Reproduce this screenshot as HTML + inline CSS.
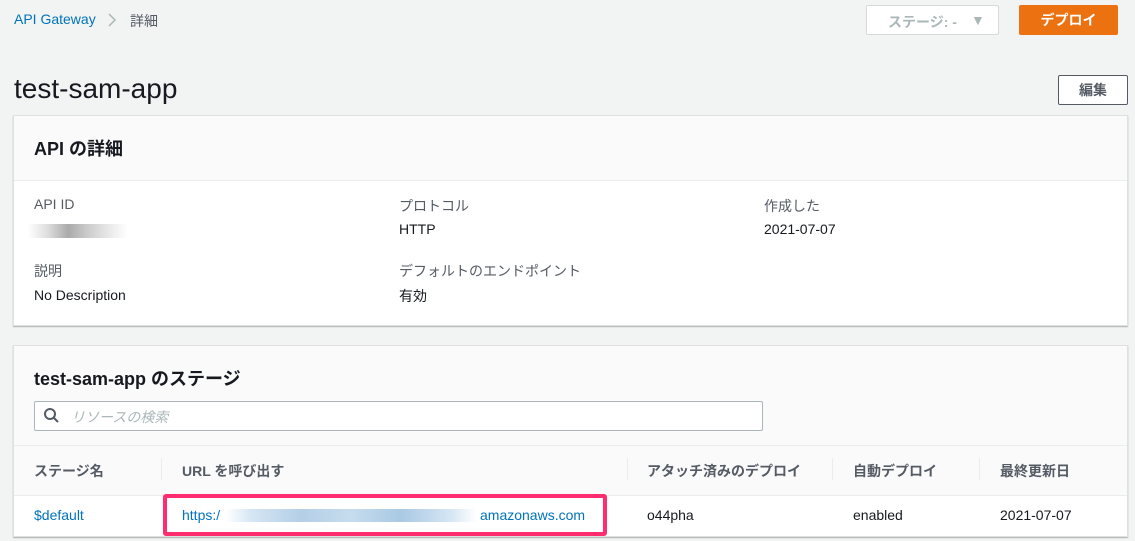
<!DOCTYPE html>
<html><head><meta charset="utf-8"><style>
*{box-sizing:border-box;margin:0;padding:0}
body{width:1135px;height:541px;overflow:hidden;background:#f2f3f3;font-family:"Liberation Sans","Noto Sans CJK JP",sans-serif;font-size:14px;color:#16191f;position:relative}
.a{position:absolute}
.link{color:#0073bb}
.panel{position:absolute;left:13px;width:1115px;background:#fff;border:1px solid #e0e0e0;box-shadow:0 1px 1px rgba(0,28,36,.3)}
.lbl{color:#545b64;font-size:14px}
.th{font-weight:bold;color:#545b64;font-size:14px}
</style></head><body>
<div class="a link" style="left:14px;top:11px;font-size:14px">API Gateway</div>
<svg class="a" style="left:107px;top:12px" width="10" height="16"><path d="M2 2l6 6-6 6" stroke="#aab7b8" stroke-width="1.5" fill="none"/></svg>
<div class="a" style="left:130px;top:11px;color:#545b64">詳細</div>
<div class="a" style="left:866px;top:5px;width:133px;height:30px;background:#fff;border:1px solid #d5dbdb;border-radius:2px;color:#aab7b8;font-weight:bold;font-size:14px;padding:6px 0 0 21px">ステージ: -<span style="position:absolute;left:104px;top:6px">▼</span></div>
<div class="a" style="left:1019px;top:5px;width:99px;height:30px;background:#ec7211;border-radius:2px;color:#fff;font-weight:bold;text-align:center;line-height:30px">デプロイ</div>
<div class="a" style="left:14px;top:73px;font-size:28px;color:#16191f">test-sam-app</div>
<div class="a" style="left:1058px;top:75px;width:70px;height:30px;background:#fff;border:1px solid #545b64;border-radius:2px;color:#545b64;font-weight:bold;text-align:center;line-height:28px">編集</div>

<div class="panel" style="top:115px;height:211px">
<div style="height:65px;background:#fafafa;border-bottom:1px solid #eaeded;padding:19px 0 0 20px;font-size:18px;font-weight:bold">API の詳細</div>
<div class="a lbl" style="left:20px;top:80px">API ID</div>
<div class="a" style="left:14px;top:108px;width:100px;height:14px;background:linear-gradient(90deg,#fff,#ddd 20%,#aaa 40%,#ccc 60%,#eee 85%,#fff)"></div>
<div class="a lbl" style="left:385px;top:80px">プロトコル</div>
<div class="a" style="left:385px;top:105px">HTTP</div>
<div class="a lbl" style="left:750px;top:80px">作成した</div>
<div class="a" style="left:750px;top:105px">2021-07-07</div>
<div class="a lbl" style="left:20px;top:145px">説明</div>
<div class="a" style="left:20px;top:171px">No Description</div>
<div class="a lbl" style="left:385px;top:145px">デフォルトのエンドポイント</div>
<div class="a" style="left:385px;top:170px">有効</div>
</div>

<div class="panel" style="top:345px;height:192px">
<div style="height:100px;background:#fafafa;border-bottom:1px solid #eaeded"></div>
<div class="a" style="left:20px;top:19px;font-size:18px;font-weight:bold">test-sam-app のステージ</div>
<div class="a" style="left:20px;top:55px;width:729px;height:30px;background:#fff;border:1px solid #aab7b8;border-radius:2px"></div>
<svg class="a" style="left:29px;top:61px" width="18" height="18"><circle cx="7" cy="7" r="5" stroke="#545b64" stroke-width="2" fill="none"/><path d="M11 11l4 4" stroke="#545b64" stroke-width="2"/></svg>
<div class="a" style="left:57px;top:61px;color:#aab7b8;font-style:italic">リソースの検索</div>
<div class="a" style="left:0;top:100px;width:1113px;height:50px;background:#fafafa;border-bottom:1px solid #eaeded"></div>
<div class="a th" style="left:20px;top:115px">ステージ名</div>
<div class="a" style="left:147px;top:112px;width:1px;height:22px;background:#eaeded"></div>
<div class="a th" style="left:168px;top:115px">URL を呼び出す</div>
<div class="a" style="left:613px;top:112px;width:1px;height:22px;background:#eaeded"></div>
<div class="a th" style="left:633px;top:115px">アタッチ済みのデプロイ</div>
<div class="a" style="left:818px;top:112px;width:1px;height:22px;background:#eaeded"></div>
<div class="a th" style="left:839px;top:115px">自動デプロイ</div>
<div class="a" style="left:965px;top:112px;width:1px;height:22px;background:#eaeded"></div>
<div class="a th" style="left:986px;top:115px">最終更新日</div>
<div class="a link" style="left:20px;top:161px">$default</div>
<div class="a" style="left:149px;top:148px;width:444px;height:42px;border:4px solid #ff2d6f;border-radius:3px"></div>
<div class="a link" style="left:168px;top:161px">https:/</div>
<div class="a" style="left:212px;top:163px;width:250px;height:13px;background:linear-gradient(90deg,#fff,#d6e6f4 10%,#b4cfe6 30%,#c6dcee 50%,#a9c9e4 70%,#d6e6f4 90%,#fff)"></div>
<div class="a link" style="left:466px;top:161px">amazonaws.com</div>
<div class="a" style="left:633px;top:161px">o44pha</div>
<div class="a" style="left:839px;top:161px">enabled</div>
<div class="a" style="left:986px;top:161px">2021-07-07</div>
</div>
</body></html>
